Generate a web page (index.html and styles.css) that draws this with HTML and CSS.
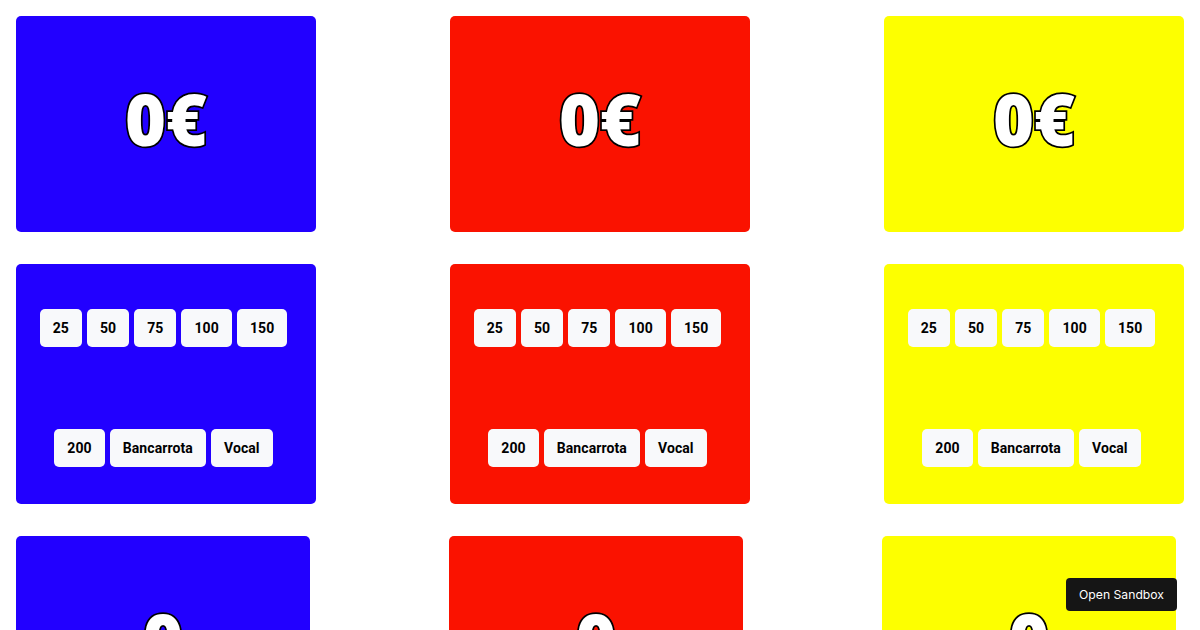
FILE: index.html
```html
<!DOCTYPE html>
<html>
<head>
<meta charset="utf-8">
<link rel="stylesheet" href="styles.css">
</head>
<body>
<div class="page">
  <div class="row">
    <div class="card score blue"><span class="big">0€</span></div>
    <div class="card score red"><span class="big">0€</span></div>
    <div class="card score yellow"><span class="big">0€</span></div>
  </div>
  <div class="row">
    <div class="card pad blue">
      <div class="line"><button>25</button><button>50</button><button>75</button><button>100</button><button>150</button></div>
      <div class="line"><button>200</button><button>Bancarrota</button><button>Vocal</button></div>
    </div>
    <div class="card pad red">
      <div class="line"><button>25</button><button>50</button><button>75</button><button>100</button><button>150</button></div>
      <div class="line"><button>200</button><button>Bancarrota</button><button>Vocal</button></div>
    </div>
    <div class="card pad yellow">
      <div class="line"><button>25</button><button>50</button><button>75</button><button>100</button><button>150</button></div>
      <div class="line"><button>200</button><button>Bancarrota</button><button>Vocal</button></div>
    </div>
  </div>
  <div class="row last">
    <div class="card score narrow blue"><span class="big">0</span></div>
    <div class="card score narrow red"><span class="big">0</span></div>
    <div class="card score narrow yellow"><span class="big">0</span></div>
  </div>
</div>
<a class="sandbox">Open Sandbox</a>
</body>
</html>
```
FILE: styles.css
```css
html, body {
  margin: 0;
  padding: 0;
  background: #ffffff;
  overflow: hidden;
}
.page {
  display: flex;
  flex-direction: column;
  gap: 32px;
  padding-top: 16px;
}
.row {
  display: flex;
  justify-content: space-between;
  padding: 0 16px;
}
.row.last {
  padding: 0 24px 0 16px;
}
.card {
  width: 300px;
  border-radius: 5px;
  box-sizing: border-box;
}
.card.narrow {
  width: 294px;
}
.blue { background: #2200ff; }
.red { background: #fa1200; }
.yellow { background: #fdff00; }
.score {
  height: 216px;
  display: flex;
  align-items: center;
  justify-content: center;
}
.big {
  font-family: "Open Sans", sans-serif;
  font-weight: 800;
  font-size: 70px;
  line-height: 1;
  color: #ffffff;
  -webkit-text-stroke: 3.5px #000000;
  paint-order: stroke fill;
  margin-top: -11px;
}
.pad {
  height: 240px;
  display: flex;
  flex-direction: column;
  justify-content: space-between;
  padding: 45px 0 37px;
}
.line {
  display: flex;
  justify-content: center;
}
button {
  font-family: Roboto, sans-serif;
  font-weight: 700;
  font-size: 14px;
  letter-spacing: 0.1px;
  color: #000000;
  background: #f8f9fb;
  border: none;
  border-radius: 5px;
  height: 38px;
  padding: 0 13px;
  margin: 0 5px 0 0;
}
.sandbox {
  position: fixed;
  right: 23px;
  bottom: 19px;
  height: 33px;
  padding: 0 13px;
  display: flex;
  align-items: center;
  background: #151515;
  color: #ffffff;
  border-radius: 4px;
  font-family: Inter, sans-serif;
  font-size: 12.2px;
}
```
